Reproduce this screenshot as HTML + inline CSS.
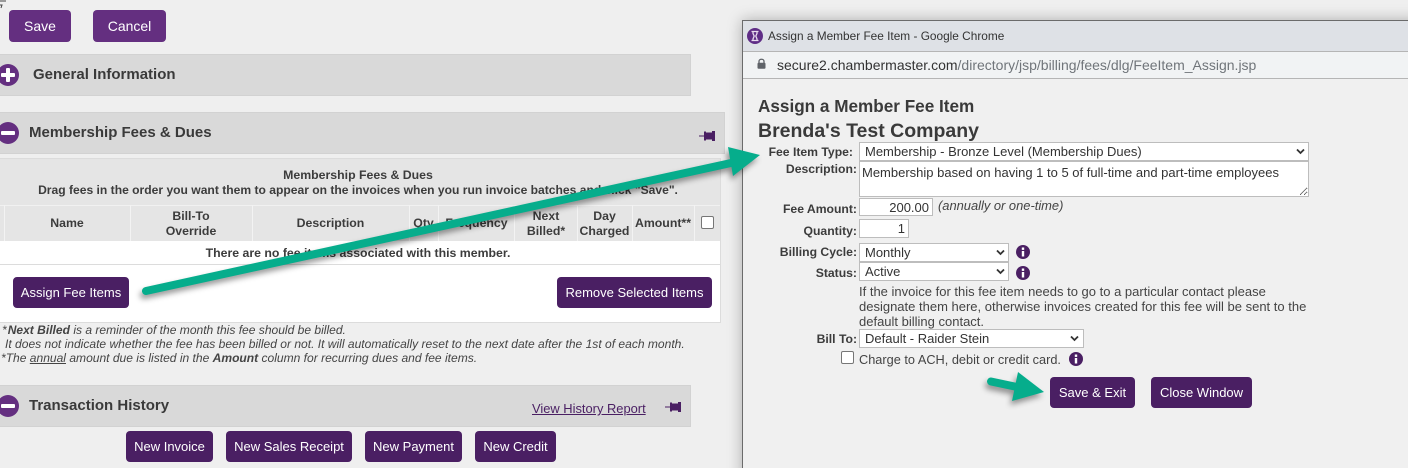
<!DOCTYPE html>
<html><head><meta charset="utf-8"><title>Assign a Member Fee Item</title>
<style>
html,body{margin:0;padding:0;width:1408px;height:468px;overflow:hidden;background:#efefef;font-family:"Liberation Sans",sans-serif;color:#333}
#root{position:relative;width:1408px;height:468px;overflow:hidden}
.a{position:absolute;white-space:nowrap}
.t{position:absolute;white-space:nowrap;line-height:16px;height:16px}
.c{text-align:center}
.r{text-align:right}
.b{font-weight:bold}
.btn{position:absolute;box-sizing:border-box;border-radius:4px;background:#4a1f63;color:#fff;font-size:13px;text-align:center;white-space:nowrap;height:32px;line-height:33px}
.btn.l{background:#642f80;font-size:14px}
.sec{position:absolute;left:0;background:#d9d9d9;border:1px solid #d2d2d2;border-left:0;box-sizing:border-box;height:42px}
.h{font-size:15px;font-weight:bold;color:#3a3a3a}
.th{font-size:12.3px;font-weight:bold;color:#3c3c3c}
.vl{position:absolute;top:205px;height:36px;width:1px;background:#f3f3f3}
.note{font-size:12.05px;font-style:italic;color:#444}
.lab{font-size:12.2px;font-weight:bold;color:#3c3c3c;width:120px;text-align:right}
.f{position:absolute;box-sizing:border-box;border:1px solid #bdbdbd;background:#fff;font-family:"Liberation Sans",sans-serif;font-size:13px;color:#333;margin:0;outline:0;border-radius:0}
select.f{appearance:none;-webkit-appearance:none;padding:0 0 0 5px}
.help{font-size:13px;color:#444}
svg{position:absolute;overflow:visible}
</style></head>
<body><div id="root">

<svg style="left:0;top:0" width="7" height="9"><path d="M0 1H6M0 5H2L1 8" fill="none" stroke="#444" stroke-width="1"/></svg>

<div class="btn l" style="left:9px;top:10px;width:62px">Save</div>
<div class="btn l" style="left:93px;top:10px;width:73px">Cancel</div>

<div class="sec" style="top:54px;width:691px"></div>
<svg style="left:-3px;top:64px" width="22" height="22"><circle cx="11" cy="11" r="11" fill="#642f80"/><rect x="4" y="9" width="14" height="4" rx="1" fill="#fff"/><rect x="9" y="4" width="4" height="14" rx="1" fill="#fff"/></svg>
<div class="t h" style="left:33px;top:67px">General Information</div>

<div class="sec" style="top:112px;width:725px"></div>
<svg style="left:-3px;top:122px" width="22" height="22"><circle cx="11" cy="11" r="11" fill="#642f80"/><rect x="4" y="9" width="14" height="4" rx="1" fill="#fff"/></svg>
<div class="t h" style="left:29px;top:125px">Membership Fees &amp; Dues</div>
<svg style="left:699px;top:130px" width="17" height="12"><path d="M0 5.5H5V1.5H7V2.5H13V1H16V11H13V9.5H7V10.5H5V6.5H0Z" fill="#4a1f63"/></svg>

<div class="a" style="left:0;top:158px;width:721px;height:165px;box-sizing:border-box;border:1px solid #dcdcdc;border-left:0;background:#fff"></div>
<div class="a" style="left:0;top:159px;width:720px;height:82px;background:#e5e5e5"></div>
<div class="a" style="left:0;top:205px;width:720px;height:1px;background:#f1f1f1"></div>
<div class="vl" style="left:4px"></div><div class="vl" style="left:130px"></div><div class="vl" style="left:252px"></div><div class="vl" style="left:409px"></div><div class="vl" style="left:438px"></div><div class="vl" style="left:514px"></div><div class="vl" style="left:577px"></div><div class="vl" style="left:632px"></div><div class="vl" style="left:694px"></div>
<div class="t th c" style="left:0;width:716px;top:167px">Membership Fees &amp; Dues</div>
<div class="t th c" style="left:0;width:716px;top:182px;font-size:12.1px">Drag fees in the order you want them to appear on the invoices when you run invoice batches and click "Save".</div>
<div class="t th c" style="left:4px;width:126px;top:215px">Name</div>
<div class="t th c" style="left:130px;width:122px;top:208px">Bill-To</div>
<div class="t th c" style="left:130px;width:122px;top:223px">Override</div>
<div class="t th c" style="left:252px;width:157px;top:215px">Description</div>
<div class="t th c" style="left:409px;width:29px;top:215px">Qty</div>
<div class="t th c" style="left:438px;width:77px;top:215px">Frequency</div>
<div class="t th c" style="left:515px;width:62px;top:208px">Next</div>
<div class="t th c" style="left:515px;width:62px;top:223px">Billed*</div>
<div class="t th c" style="left:577px;width:55px;top:208px">Day</div>
<div class="t th c" style="left:577px;width:55px;top:223px">Charged</div>
<div class="t th c" style="left:632px;width:62px;top:215px">Amount**</div>
<div class="a" style="left:701px;top:216px;width:13px;height:13px;box-sizing:border-box;border:1px solid #767676;border-radius:2px;background:#fff"></div>
<div class="t th c" style="left:0;width:716px;top:245px">There are no fee items associated with this member.</div>
<div class="a" style="left:0;top:264px;width:720px;height:1px;background:#dcdcdc"></div>
<div class="btn" style="left:13px;top:277px;width:116px;height:31px;line-height:32px">Assign Fee Items</div>
<div class="btn" style="left:557px;top:277px;width:155px;height:31px;line-height:32px">Remove Selected Items</div>

<div class="t note" style="left:2px;top:322px">*<b style="margin-left:1px">Next Billed</b> is a reminder of the month this fee should be billed.</div>
<div class="t note" style="left:5px;top:336px">It does not indicate whether the fee has been billed or not. It will automatically reset to the next date after the 1st of each month.</div>
<div class="t note" style="left:1px;top:350px">*The <u>annual</u> amount due is listed in the <b>Amount</b> column for recurring dues and fee items.</div>

<div class="sec" style="top:385px;width:691px"></div>
<svg style="left:-3px;top:395px" width="22" height="22"><circle cx="11" cy="11" r="11" fill="#642f80"/><rect x="4" y="9" width="14" height="4" rx="1" fill="#fff"/></svg>
<div class="t h" style="left:29px;top:398px">Transaction History</div>
<div class="t" style="left:532px;top:401px;font-size:12.9px;color:#4a1f63;text-decoration:underline">View History Report</div>
<svg style="left:665px;top:401px" width="17" height="12"><path d="M0 5.5H5V1.5H7V2.5H13V1H16V11H13V9.5H7V10.5H5V6.5H0Z" fill="#4a1f63"/></svg>
<div class="btn" style="left:126px;top:431px;width:87px;height:31px;line-height:31px">New Invoice</div>
<div class="btn" style="left:226px;top:431px;width:126px;height:31px;line-height:31px">New Sales Receipt</div>
<div class="btn" style="left:365px;top:431px;width:97px;height:31px;line-height:31px">New Payment</div>
<div class="btn" style="left:475px;top:431px;width:81px;height:31px;line-height:31px">New Credit</div>

<!-- popup -->
<div class="a" style="left:742px;top:20px;width:680px;height:460px;box-sizing:border-box;border:1px solid #6b6b6b;border-right:0;background:#f0f0f0;box-shadow:0 0 14px rgba(0,0,0,.28)">
  <div style="position:absolute;left:0;top:0;right:0;height:31px;background:#dee1e6;border-bottom:1px solid #b5b5b5;box-sizing:border-box"></div>
  <div style="position:absolute;left:0;top:31px;right:0;height:27px;background:#f1f3f4;border-bottom:1px solid #b5b5b5;box-sizing:border-box"></div>
</div>
<svg style="left:747px;top:28px" width="16" height="16"><circle cx="8" cy="8" r="8" fill="#5f2d86"/><path d="M4.5 3.500H11.5M4.5 12.5H11.5M6 4V5.500L7.2 8L6 11V12M10 4V5.500L8.800 8L10 11V12" fill="none" stroke="#e8dcef" stroke-width="1.3"/></svg>
<div class="t" style="left:768px;top:28px;font-size:11.85px;color:#333">Assign a Member Fee Item - Google Chrome</div>
<svg style="left:757px;top:58px" width="9" height="11"><path d="M2 5V3.2C2 .6 7 .6 7 3.2V5" fill="none" stroke="#5f6368" stroke-width="1.3"/><rect x="0.5" y="4.8" width="8" height="6" rx="1" fill="#5f6368"/></svg>
<div class="t" style="left:777px;top:57px;font-size:14px;color:#70757a"><span style="color:#333">secure2.chambermaster.com</span>/directory/jsp/billing/fees/dlg/FeeItem_Assign.jsp</div>

<div class="t b" style="left:758px;top:97px;font-size:17.15px;line-height:18px;height:18px;color:#3a3a3a">Assign a Member Fee Item</div>
<div class="t b" style="left:758px;top:120px;font-size:19.5px;line-height:22px;height:22px;color:#3a3a3a">Brenda's Test Company</div>

<div class="t lab" style="left:733px;top:144px">Fee Item Type:</div>
<select class="f" style="left:859px;top:142px;width:450px;height:19px"><option>Membership - Bronze Level (Membership Dues)</option></select>
<div class="t lab" style="left:737px;top:161px">Description:</div>
<textarea class="f" style="left:859px;top:161px;width:450px;height:36px;padding:3px 2px 1px;line-height:15px;overflow:hidden">Membership based on having 1 to 5 of full-time and part-time employees</textarea>
<div class="t lab" style="left:737px;top:201px">Fee Amount:</div>
<input class="f" style="left:859px;top:198px;width:74px;height:18px;text-align:right;padding:0 3px" value="200.00">
<div class="t help" style="left:938px;top:198px;font-size:12.9px;font-style:italic">(annually or one-time)</div>
<div class="t lab" style="left:737px;top:223px">Quantity:</div>
<input class="f" style="left:859px;top:219px;width:50px;height:19px;text-align:right;padding:0 3px" value="1">
<div class="t lab" style="left:737px;top:244px">Billing Cycle:</div>
<select class="f" style="left:859px;top:243px;width:150px;height:19px"><option>Monthly</option></select>
<div class="t lab" style="left:737px;top:265px">Status:</div>
<select class="f" style="left:859px;top:262px;width:150px;height:19px"><option>Active</option></select>
<div class="t help" style="left:859px;top:284px">If the invoice for this fee item needs to go to a particular contact please</div>
<div class="t help" style="left:859px;top:299px">designate them here, otherwise invoices created for this fee will be sent to the</div>
<div class="t help" style="left:859px;top:314px">default billing contact.</div>
<div class="t lab" style="left:737px;top:331px">Bill To:</div>
<select class="f" style="left:859px;top:329px;width:225px;height:19px"><option>Default - Raider Stein</option></select>
<div class="a" style="left:841px;top:351px;width:13px;height:13px;box-sizing:border-box;border:1px solid #767676;border-radius:2px;background:#fff"></div>
<div class="t help" style="left:859px;top:352px;font-size:12.75px">Charge to ACH, debit or credit card.</div>

<svg style="left:1296px;top:148px" width="9" height="7"><path d="M1 1.500L4.500 5L8 1.500" fill="none" stroke="#333" stroke-width="1.8"/></svg>
<svg style="left:996px;top:249px" width="9" height="7"><path d="M1 1.500L4.500 5L8 1.500" fill="none" stroke="#333" stroke-width="1.8"/></svg>
<svg style="left:996px;top:268px" width="9" height="7"><path d="M1 1.500L4.500 5L8 1.500" fill="none" stroke="#333" stroke-width="1.8"/></svg>
<svg style="left:1070px;top:335px" width="9" height="7"><path d="M1 1.500L4.500 5L8 1.500" fill="none" stroke="#333" stroke-width="1.8"/></svg>
<svg style="left:1016px;top:245px" width="14" height="14"><circle cx="7" cy="7" r="7" fill="#4a1f63"/><rect x="5.8" y="2.5" width="2.4" height="2.4" fill="#fff"/><rect x="5.8" y="6" width="2.4" height="5.5" fill="#fff"/></svg>
<svg style="left:1016px;top:266px" width="14" height="14"><circle cx="7" cy="7" r="7" fill="#4a1f63"/><rect x="5.8" y="2.5" width="2.4" height="2.4" fill="#fff"/><rect x="5.8" y="6" width="2.4" height="5.5" fill="#fff"/></svg>
<svg style="left:1069px;top:352px" width="14" height="14"><circle cx="7" cy="7" r="7" fill="#4a1f63"/><rect x="5.8" y="2.5" width="2.4" height="2.4" fill="#fff"/><rect x="5.8" y="6" width="2.4" height="5.5" fill="#fff"/></svg>

<div class="btn" style="left:1050px;top:377px;width:85px;height:31px;line-height:31px">Save &amp; Exit</div>
<div class="btn" style="left:1151px;top:377px;width:101px;height:31px;line-height:31px">Close Window</div>

<!-- arrows -->
<svg style="left:0;top:0;filter:drop-shadow(-2px 4px 3px rgba(0,0,0,.4))" width="1408" height="468">
<path d="M146 291L731 163" fill="none" stroke="#06ad8c" stroke-width="8" stroke-linecap="round"/>
<path d="M728 147L760 155L733 176Z" fill="#06ad8c"/>
<path d="M991 381.500L1017 387" fill="none" stroke="#06ad8c" stroke-width="8" stroke-linecap="round"/>
<path d="M1018 372L1044 392L1012 401Z" fill="#06ad8c"/>
</svg>

</div></body></html>
